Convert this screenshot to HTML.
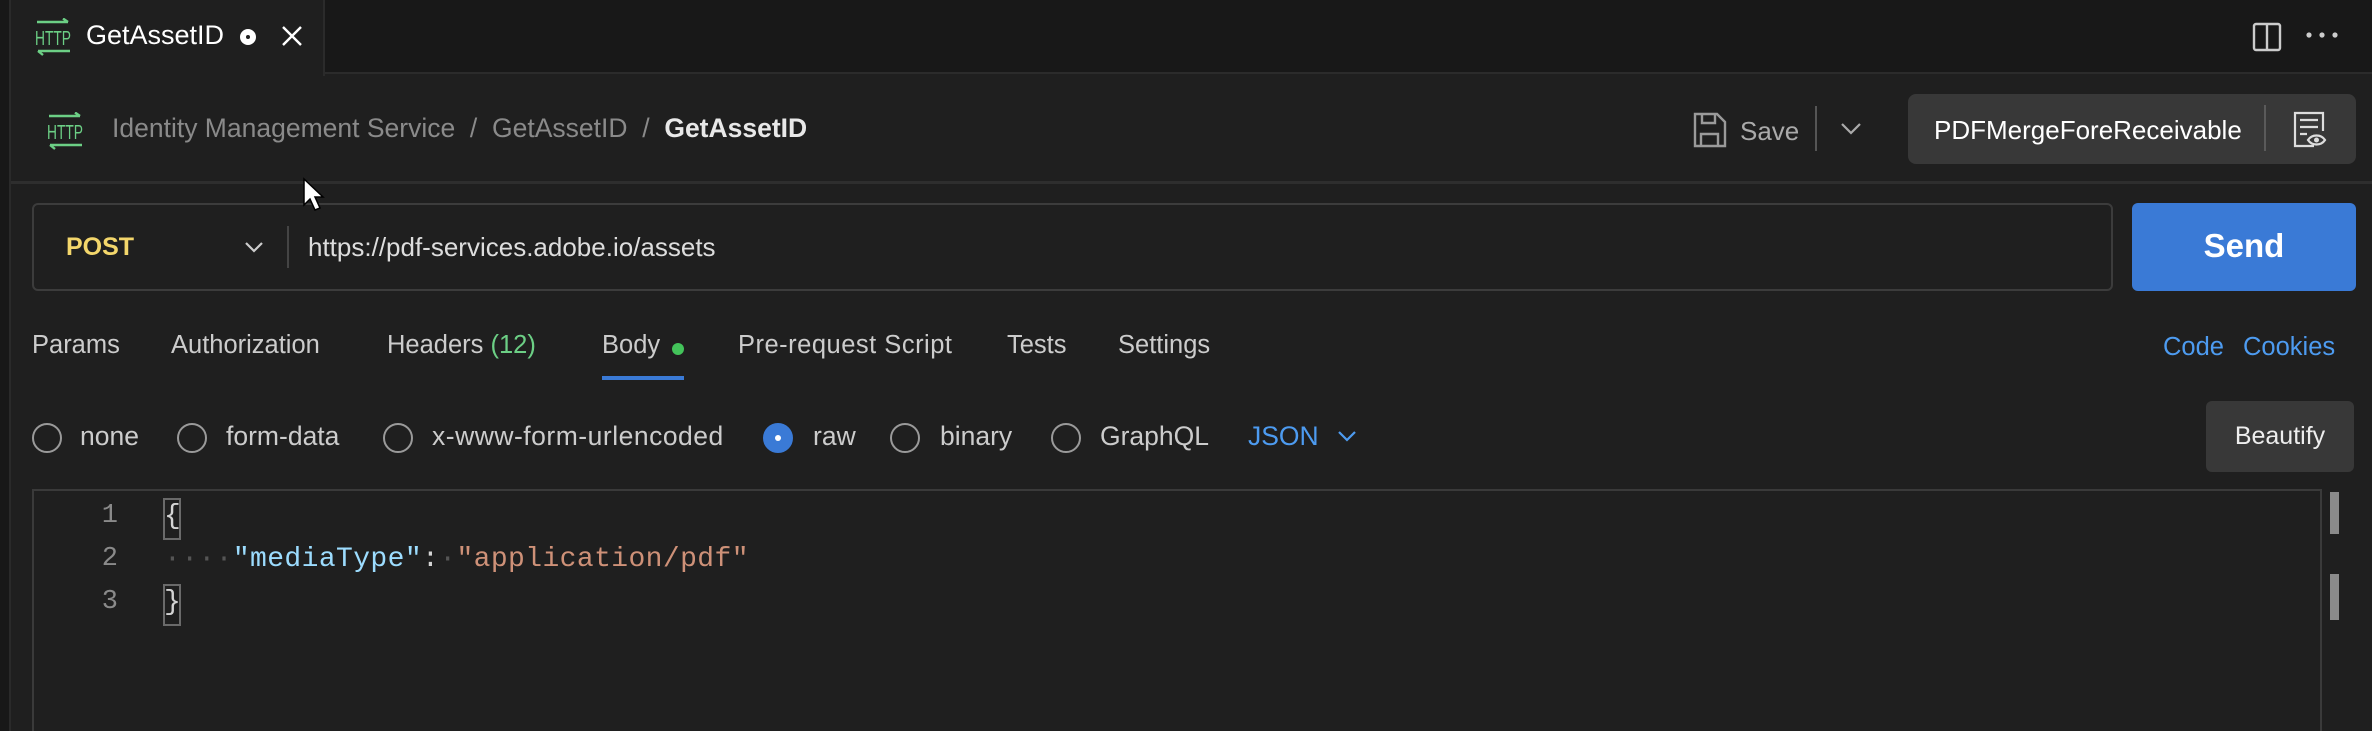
<!DOCTYPE html>
<html style="overflow:hidden;height:731px"><head><meta charset="utf-8"><style>
*{box-sizing:border-box;margin:0;padding:0}
body{width:2372px;height:731px;background:#1f1f1f;font-family:"Liberation Sans",sans-serif;color:#cccccc;position:relative;overflow:hidden}
.a{position:absolute;white-space:nowrap}
.mono{font-family:"Liberation Mono",monospace}
.radio{position:absolute;width:30px;height:30px;border:2px solid #9a9a9a;border-radius:50%}
</style></head><body>
<div class="a" style="left:0;top:0;width:2372px;height:74px;background:#181818;border-bottom:2px solid #2b2b2b"></div>
<div class="a" style="left:0;top:0;width:11px;height:731px;background:#181818;border-right:2px solid #2a2a2a"></div>
<div class="a" style="left:11px;top:0;width:314px;height:76px;background:#1f1f1f;border-right:2px solid #2b2b2b"></div>
<svg class="a" style="left:34px;top:18px" width="40" height="38" viewBox="0 0 40 38"><g fill="none" stroke="#6ccf85" stroke-width="2.4"><path d="M3 4H34M29 0.5l5 3.5"/><path d="M4 33H36M9 37l-5-4"/></g><text x="1" y="27" font-family="Liberation Sans" font-size="20" fill="#6ccf85" textLength="36" lengthAdjust="spacingAndGlyphs">HTTP</text></svg>
<div class="a" style="left:86px;top:20px;font-size:27px;color:#fff">GetAssetID</div>
<div class="a" style="left:240px;top:29px;width:16px;height:16px;border-radius:50%;background:#fff"></div>
<div class="a" style="left:246px;top:35px;width:4px;height:4px;border-radius:50%;background:#1f1f1f"></div>
<svg class="a" style="left:281px;top:25px" width="22" height="22"><path d="M2 2L20 20M20 2L2 20" stroke="#fff" stroke-width="2.4"/></svg>
<svg class="a" style="left:2252px;top:22px" width="30" height="30"><rect x="2" y="2" width="26" height="26" rx="2" fill="none" stroke="#ccc" stroke-width="2.4"/><path d="M15 2v26" stroke="#ccc" stroke-width="2.4"/></svg>
<svg class="a" style="left:2304px;top:30px" width="36" height="10"><circle cx="5" cy="5" r="2.6" fill="#ccc"/><circle cx="18" cy="5" r="2.6" fill="#ccc"/><circle cx="31" cy="5" r="2.6" fill="#ccc"/></svg>
<!-- breadcrumb -->
<svg class="a" style="left:46px;top:112px" width="40" height="38" viewBox="0 0 40 38"><g fill="none" stroke="#6ccf85" stroke-width="2.4"><path d="M3 4H34M29 0.5l5 3.5"/><path d="M4 33H36M9 37l-5-4"/></g><text x="1" y="27" font-family="Liberation Sans" font-size="20" fill="#6ccf85" textLength="36" lengthAdjust="spacingAndGlyphs">HTTP</text></svg>
<div class="a" style="left:112px;top:113px;font-size:26.5px;color:#8a8a8a">Identity Management Service&nbsp;&nbsp;/&nbsp;&nbsp;GetAssetID&nbsp;&nbsp;/&nbsp;&nbsp;<b style="color:#e8e8e8">GetAssetID</b></div>
<svg class="a" style="left:1693px;top:112px" width="34" height="36"><path d="M2 2h22l8 8v24H2z M9 2v9h13V2 M8 34V22h17v12" fill="none" stroke="#9a9a9a" stroke-width="2.4"/></svg>
<div class="a" style="left:1740px;top:116px;font-size:26px;color:#aaa">Save</div>
<div class="a" style="left:1815px;top:106px;width:2px;height:45px;background:#555"></div>
<svg class="a" style="left:1840px;top:122px" width="22" height="14"><path d="M2 2l9 9 9-9" fill="none" stroke="#aaa" stroke-width="2.2"/></svg>
<div class="a" style="left:1908px;top:94px;width:448px;height:70px;background:#383838;border-radius:8px"></div>
<div class="a" style="left:1934px;top:115px;font-size:26px;color:#fff">PDFMergeForeReceivable</div>
<div class="a" style="left:2264px;top:105px;width:2px;height:46px;background:#5a5a5a"></div>
<svg class="a" style="left:2292px;top:110px" width="36" height="40"><path d="M22 36H3V3h28v18" fill="none" stroke="#ddd" stroke-width="2.2"/><path d="M8 10h18M8 17h18M8 24h7" stroke="#ddd" stroke-width="2.2"/><path d="M16 30c4-6 13-6 17 0c-4 6-13 6-17 0z" fill="#383838" stroke="#ddd" stroke-width="2.2"/><circle cx="24.5" cy="30" r="2.5" fill="#ddd"/></svg>
<div class="a" style="left:11px;top:181px;width:2361px;height:3px;background:#2e2e2e"></div>
<!-- url -->
<div class="a" style="left:32px;top:203px;width:2081px;height:88px;border:2px solid #3c3c3c;border-radius:6px"></div>
<div class="a" style="left:66px;top:233px;font-size:25px;color:#f3d66b;font-weight:bold">POST</div>
<svg class="a" style="left:244px;top:241px" width="20" height="13"><path d="M2 2l8 8 8-8" fill="none" stroke="#ccc" stroke-width="2.2"/></svg>
<div class="a" style="left:287px;top:226px;width:2px;height:42px;background:#444"></div>
<div class="a" style="left:308px;top:232px;font-size:26px;color:#ddd">https://pdf-services.adobe.io/assets</div>
<div class="a" style="left:2132px;top:203px;width:224px;height:88px;background:#3a7ad6;border-radius:6px"></div>
<div class="a" style="left:2132px;top:227px;width:224px;text-align:center;font-size:33px;color:#fff;font-weight:bold">Send</div>
<!-- tabs -->
<div class="a" style="top:331px;left:32px;font-size:25.5px">Params</div>
<div class="a" style="top:331px;left:171px;font-size:25.5px">Authorization</div>
<div class="a" style="top:331px;left:387px;font-size:25.5px">Headers <span style="color:#6ccf85">(12)</span></div>
<div class="a" style="top:331px;left:602px;font-size:25.5px">Body</div>
<div class="a" style="top:343px;left:672px;width:12px;height:12px;border-radius:50%;background:#43c35a"></div>
<div class="a" style="top:376px;left:602px;width:82px;height:4px;background:#3a7ad6"></div>
<div class="a" style="top:331px;left:738px;font-size:25.5px;letter-spacing:0.5px">Pre-request Script</div>
<div class="a" style="top:331px;left:1007px;font-size:25.5px">Tests</div>
<div class="a" style="top:331px;left:1118px;font-size:25.5px">Settings</div>
<div class="a" style="top:333px;left:2163px;font-size:25.5px;color:#4d9bf0">Code</div>
<div class="a" style="top:333px;left:2243px;font-size:25.5px;color:#4d9bf0">Cookies</div>
<!-- radios -->
<div class="radio" style="left:32px;top:423px"></div><div class="a" style="left:80px;top:421px;font-size:26.5px">none</div>
<div class="radio" style="left:177px;top:423px"></div><div class="a" style="left:226px;top:421px;font-size:26.5px">form-data</div>
<div class="radio" style="left:383px;top:423px"></div><div class="a" style="left:432px;top:421px;font-size:26.5px;letter-spacing:0.5px">x-www-form-urlencoded</div>
<div class="radio" style="left:763px;top:423px;background:#3a7ad6;border-color:#3a7ad6"></div><div class="a" style="left:775px;top:435px;width:6px;height:6px;border-radius:50%;background:#fff"></div><div class="a" style="left:813px;top:421px;font-size:26.5px">raw</div>
<div class="radio" style="left:890px;top:423px"></div><div class="a" style="left:940px;top:421px;font-size:26.5px">binary</div>
<div class="radio" style="left:1051px;top:423px"></div><div class="a" style="left:1100px;top:421px;font-size:26.5px">GraphQL</div>
<div class="a" style="left:1248px;top:421px;font-size:26.5px;color:#4d9bf0">JSON</div>
<svg class="a" style="left:1337px;top:430px" width="20" height="13"><path d="M2 2l8 8 8-8" fill="none" stroke="#4d9bf0" stroke-width="2.2"/></svg>
<div class="a" style="left:2206px;top:401px;width:148px;height:71px;background:#383838;border-radius:6px"></div>
<div class="a" style="left:2206px;top:422px;width:148px;text-align:center;font-size:25px;color:#eee">Beautify</div>
<!-- editor -->
<div class="a" style="left:32px;top:489px;width:2290px;height:252px;border:2px solid #3a3a3a"></div>
<div class="a" style="left:2330px;top:492px;width:9px;height:42px;background:#8a8a8a"></div>
<div class="a" style="left:2330px;top:574px;width:9px;height:46px;background:#8a8a8a"></div>
<div class="a mono" style="left:60px;top:495px;width:58px;text-align:right;font-size:27px;line-height:43px;color:#8a8a8a">1<br>2<br>3</div>
<div class="a mono" style="left:164px;top:495px;font-size:28px;letter-spacing:0.4px;line-height:43px;color:#d4d4d4">{<br><span style="color:#555">····</span><span style="color:#9cdcfe">"mediaType"</span>:<span style="color:#555">·</span><span style="color:#ce9178">"application/pdf"</span><br>}</div>
<div class="a" style="left:163px;top:498px;width:18px;height:42px;border:2px solid #6a6a6a"></div>
<div class="a" style="left:163px;top:584px;width:18px;height:42px;border:2px solid #6a6a6a"></div>
<svg class="a" style="left:302px;top:177px" width="24" height="36"><path d="M2 2v26l6-6 5 11 5-2-5-11h8z" fill="#fff" stroke="#000" stroke-width="1.5"/></svg>
</body></html>
